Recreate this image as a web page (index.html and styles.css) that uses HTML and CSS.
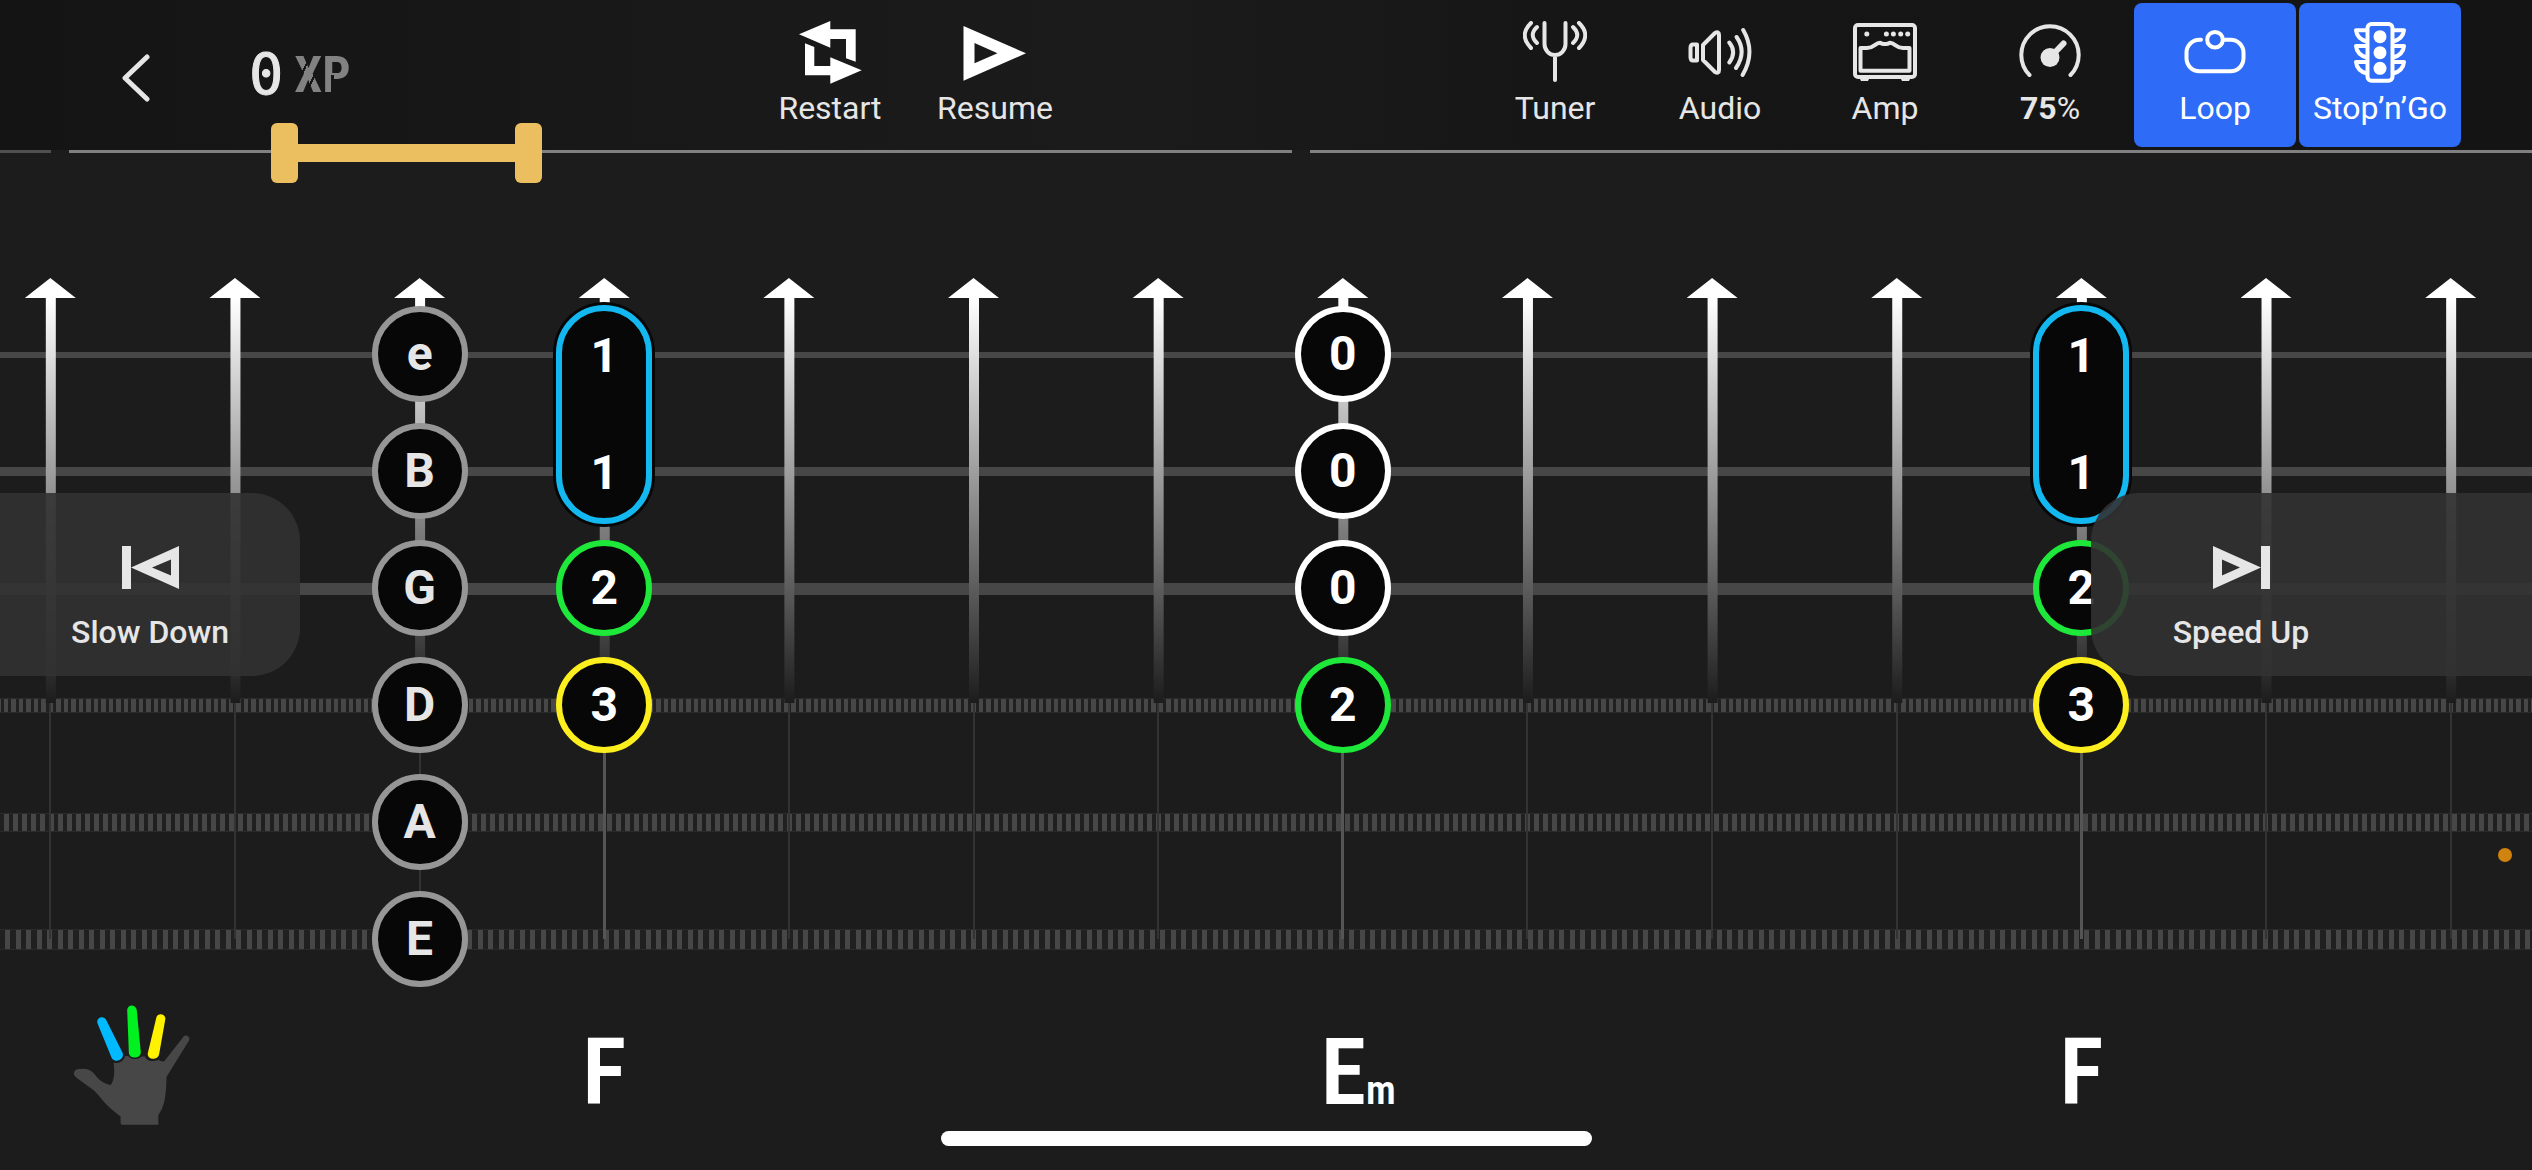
FILE: index.html
```html
<!DOCTYPE html>
<html lang="en">
<head>
<meta charset="utf-8">
<meta name="viewport" content="width=device-width, initial-scale=1">
<title>Chord practice</title>
<link rel="stylesheet" href="styles.css">
</head>
<body>
<header class="topbar">
  <div class="status">
    <button class="back" aria-label="Back"><svg width="28" height="48" viewBox="0 0 28 48" fill="none" stroke="currentColor" stroke-width="5" stroke-linecap="round" stroke-linejoin="round"><path d="M25 3 3 24 25 45"/></svg></button>
    <p class="score"><span class="score-value">0</span><span class="score-unit"><span class="unit-x">X</span><span class="unit-p">P</span></span></p>
  </div>
  <nav class="group">
    <button class="tool"><svg class="icon solid" viewBox="0 0 64 63"><path d="M1 13.3 32.3 0V8.3H57.7V40.7L48 37.3V18H32.3V26.7Z"/><path d="M7 22.3 16.3 26V45H32.3V36.3L63.7 49.3 32.3 62.7V54.3H7Z"/></svg>Restart</button>
    <button class="tool"><svg class="icon solid" viewBox="0 0 64 63"><path fill-rule="evenodd" d="M.5 5 63 32.3.5 59.7ZM11.5 22V42.3L34.5 32.3Z"/></svg>Resume</button>
  </nav>
  <nav class="group tools">
    <button class="tool"><svg class="icon" viewBox="0 0 64 63"><path d="M21.500 2V23a10.500 11 0 0 0 21 0V2M32 34V59M8 2Q-4.500 14 8 27M14 6Q5.500 14 14 22M56 2Q68.500 14 56 27M50 6Q58.500 14 50 22"/></svg>Tuner</button>
    <button class="tool"><svg class="icon" viewBox="0 0 64 63"><path d="M9 23.500H5Q2.500 23.500 2.500 27V36Q2.500 39.500 5 39.500H9ZM15 24 27 12Q31 10 31 14V49Q31 53 27 51L15 39ZM41.300 21.500Q49 31 41.300 41.500M48.600 16Q59 31 48 47M55.200 9Q68 31 54.600 54"/></svg>Audio</button>
    <button class="tool"><svg class="icon" viewBox="0 0 64 63"><rect x="2" y="4" width="60" height="52" rx="3"/><path d="M7.500 49.700V27H14C21 27 22 22 27 21.700Q30 23.500 32 23Q34 23.500 37 21.700C42 22 43 27 50 27H56.500V49.700Z"/><g class="fill"><circle cx="13.800" cy="13" r="2.500"/><circle cx="33.400" cy="13" r="2.500"/><circle cx="40.400" cy="13" r="2.500"/><circle cx="47.700" cy="13" r="2.500"/><circle cx="54.700" cy="13" r="2.500"/><path d="M6 56H17L15 60H8ZM47 56H58L56 60H49Z"/></g></svg>Amp</button>
    <button class="tool"><svg class="icon" viewBox="0 0 64 63"><path d="M11.500 54A28.700 28.700 0 1 1 52.500 54"/><circle class="fill" cx="32" cy="36.500" r="9.500"/><path class="thick" d="M32 36.500 45.500 22.500"/></svg><span><b>75</b>%</span></button>
    <button class="tool active" aria-pressed="true"><svg class="icon" viewBox="0 0 64 63"><path d="M18 18.700H16.500A13 13 0 0 0 3.500 31.700V37.300A13 13 0 0 0 16.500 50.300H47.500A13 13 0 0 0 60.500 37.300V31.700A13 13 0 0 0 47.500 18.700H40"/><circle cx="32" cy="18.700" r="7.800"/></svg>Loop</button>
    <button class="tool active" aria-pressed="true"><svg class="icon" viewBox="0 0 64 63"><rect x="19.500" y="3" width="25" height="56.700" rx="4"/><g class="fill"><circle cx="32" cy="15.700" r="6.500"/><circle cx="32" cy="31.700" r="6.500"/><circle cx="32" cy="47.300" r="6.500"/></g><path d="M45 9.300H56Q55 18 45 20.500M45 25H56Q55 34 45 36.500M45 41H56Q55 50 45 52.500M19 9.300H8Q9 18 19 20.500M19 25H8Q9 34 19 36.500M19 41H8Q9 50 19 52.500"/></svg>Stop’n’Go</button>
  </nav>
</header>
<div class="timeline">
  <span class="segment past"></span><span class="segment"></span><span class="segment"></span>
  <div class="loop-range"><button class="handle" aria-label="Loop start"></button><button class="handle" aria-label="Loop end"></button></div>
</div>
<main>
  <section class="fretboard">
    <div class="strings">
      <div class="row"><i class="string s1"></i></div>
      <div class="row"><i class="string s2"></i></div>
      <div class="row"><i class="string s3"></i></div>
      <div class="row"><i class="string wound s4"></i></div>
      <div class="row"><i class="string wound s5"></i></div>
      <div class="row"><i class="string wound s6"></i></div>
    </div>
    <div class="beats">
      <i class="beat"></i><i class="beat"></i><i class="beat"></i><i class="beat chord"></i><i class="beat"></i><i class="beat"></i><i class="beat"></i><i class="beat chord"></i><i class="beat"></i><i class="beat"></i><i class="beat"></i><i class="beat chord"></i><i class="beat"></i><i class="beat"></i>
    </div>
    <div class="notes">
      <div class="stack tuning"><span class="note">e</span><span class="note">B</span><span class="note">G</span><span class="note">D</span><span class="note">A</span><span class="note">E</span></div>
      <div class="stack at-4"><span class="note barre index"><span>1</span><span>1</span></span><span class="note middle">2</span><span class="note ring">3</span></div>
      <div class="stack at-8"><span class="note">0</span><span class="note">0</span><span class="note">0</span><span class="note middle">2</span></div>
      <div class="stack at-12"><span class="note barre index"><span>1</span><span>1</span></span><span class="note middle">2</span><span class="note ring">3</span></div>
    </div>
    <button class="pace slower"><svg width="57" height="43" viewBox="0 0 57 43" fill="currentColor"><path d="M0 0H9V43H0Z"/><path fill-rule="evenodd" d="M9 21.500 57 0V43ZM30 21.500 49 29.500V13.500Z"/></svg>Slow Down</button>
    <button class="pace faster"><svg width="57" height="43" viewBox="0 0 57 43" fill="currentColor"><path d="M48 0H57V43H48Z"/><path fill-rule="evenodd" d="M48 21.500 0 0V43ZM27 21.500 9 29.500V13.500Z"/></svg>Speed Up</button>
    <i class="mic-dot"></i>
  </section>
</main>
<footer>
  <svg class="hand" viewBox="40 44 352 362"><g fill="#474747"><path d="M42 250Q44 236 62 237C86 234 100 245 112 262Q128 281 153 285C166 270 165 240 162 218Q188 224 197 198H205Q226 214 248 199H256Q266 220 298 210Q308 217 316 213L322 252Q321 310 315 335Q310 358 297 376V405H188Q183 405 183 400V380Q150 356 132 335Q116 314 102 301L52 265Q42 258 42 250Z"/><path d="M313 216 371 142C377 131 394 137 390 150L321 262Z"/></g><g stroke="#1c1c1c" stroke-width="8" stroke-linejoin="round" paint-order="stroke"><path fill="#00b9ff" d="M113 98C110 80 134 75 140 90L189 188C196 209 167 222 156 203Z"/><path fill="#00f020" d="M203 60C203 41 230 41 232 60L244 186C245 208 209 208 208 187Z"/><path fill="#fff200" d="M291 82C295 66 320 70 318 87L299 194C294 213 263 209 265 190Z"/></g></svg>
  <div class="chords">
    <span class="chord-name at-4">F</span>
    <span class="chord-name at-8">E<small>m</small></span>
    <span class="chord-name at-12">F</span>
  </div>
</footer>
<div class="home-indicator"></div>
</body>
</html>
```
FILE: styles.css
```css
:root {
  --bg: #1c1c1c;
  --text: #e6e6e6;
  --string: #474747;
  --row: 117px;
}
* { box-sizing: border-box; }
body {
  margin: 0;
  min-height: 100vh;
  display: flex;
  flex-direction: column;
  background: var(--bg);
  color: var(--text);
  font-family: Roboto, "Liberation Sans", sans-serif;
  font-size: 32px;
  line-height: 32px;
  overflow-x: hidden;
}
button {
  margin: 0;
  padding: 0;
  border: 0;
  background: none;
  color: inherit;
  font: inherit;
}

/* Top bar */
.topbar {
  display: flex;
  height: 150px;
  padding: 3px 71px 3px 0;
  background: linear-gradient(90deg, #141414, #191919 30%, #1b1b1b 45%, #161616 62%, #141414);
}
.status {
  display: flex;
  align-items: center;
  flex: 0 0 749px;
  padding-left: 122px;
  gap: 99px;
}
.back { display: flex; padding-top: 6px; }
.score { display: flex; align-items: center; gap: 11px; margin: 0; }
.score-value { font: 57px/56px "DejaVu Sans Mono", monospace; -webkit-text-stroke: 1px var(--text); }
.score-unit { display: flex; font: 700 50px/50px "Roboto Condensed", Roboto, sans-serif; color: transparent; }
.unit-x {
  background: linear-gradient(115deg, #828282 calc(50% - 7px), transparent 0 calc(50% - 5px), #828282 0 calc(50% + 5px), transparent 0 calc(50% + 7px), #828282 0);
  background-clip: text;
  -webkit-background-clip: text;
}
.unit-p {
  background: linear-gradient(#828282, #828282) top / 100% 50% no-repeat, linear-gradient(90deg, #828282 9px, transparent 0 12px, #828282 0) bottom / 100% 50% no-repeat;
  background-clip: text;
  -webkit-background-clip: text;
}
.group { display: flex; gap: 3px; }
.tools { margin-left: auto; }
.tool {
  display: flex;
  flex-direction: column;
  align-items: center;
  gap: 8px;
  width: 162px;
  padding-top: 18px;
  border-radius: 8px;
  white-space: nowrap;
}
.tool.active { background: #2e6bf6; color: #fff; }
.icon {
  width: 64px;
  height: 63px;
  fill: none;
  stroke: currentColor;
  stroke-width: 4;
  stroke-linecap: round;
  stroke-linejoin: round;
}
.icon.solid { fill: #fff; stroke: none; }
.icon .fill { fill: currentColor; stroke: none; }
.icon .thick { stroke-width: 6; }

/* Song position and loop range */
.timeline { position: relative; display: flex; gap: 18px; height: 3px; }
.segment { flex: 1222; background: #808080; }
.segment.past { flex: 51; background: #505050; }
.loop-range {
  position: absolute;
  left: 10.700%;
  top: -27px;
  display: flex;
  justify-content: space-between;
  width: 271px;
  height: 60px;
  background: linear-gradient(#ebbf60, #ebbf60) center / 240px 18px no-repeat;
}
.handle { width: 27px; border-radius: 6px; background: #ebbf60; }

/* Fretboard */
.fretboard {
  position: relative;
  display: grid;
  margin-top: 125px;
  overflow: hidden;
}
.strings, .beats, .notes { grid-area: 1 / 1; }
.strings { padding-top: 18px; }
.row { display: flex; align-items: center; height: var(--row); }
.string { flex: 1; background: var(--string); }
.s1 { height: 6px; }
.s2 { height: 9px; }
.s3 { height: 12px; }
.wound { border: solid #2a2a2a; border-width: 1px 0; background-color: var(--bg); }
.s4 { height: 15px; background-image: repeating-linear-gradient(90deg, #474747 0 1px, #202020 0 4px, #474747 0 8px, #202020 0 11px, #474747 0 15px); }
.s5 { height: 19px; background-image: repeating-linear-gradient(90deg, #202020 0 4px, #474747 0 9px); }
.s6 { height: 21px; background-image: repeating-linear-gradient(90deg, #202020 0 5px, #474747 0 10px, #202020 0 16px, #474747 0 21px); }

.beats, .notes, .chords {
  display: grid;
  grid-template-columns: repeat(14, 1fr);
  margin: 0 -11px 0 -42px;
}
.beat { display: flex; flex-direction: column; align-items: center; }
.beat::before {
  content: "";
  width: 51px;
  height: 425px;
  background: linear-gradient(#fff, #fff 20px, var(--bg));
  clip-path: polygon(50% 0, 100% 20px, 31px 20px, 31px 100%, 21px 100%, 21px 20px, 0 20px);
}
.beat::after { content: ""; width: 2px; height: 236px; background: #333; }
.beat.chord::after { width: 3px; background: #555; }

.notes { z-index: 1; padding-top: 18px; font-size: 48px; font-weight: 700; }
.stack { grid-row: 1; display: flex; flex-direction: column; align-items: center; }
.note {
  display: flex;
  align-items: center;
  justify-content: center;
  width: 96px;
  height: 96px;
  margin: 10px 0 11px;
  border: 6px solid #fff;
  border-radius: 48px;
  background: #070707;
  color: #fff;
}
.note.barre {
  flex-direction: column;
  gap: 85px;
  height: 219px;
  margin: 9px 0 6px;
  box-shadow: 0 0 0 3px #070707;
}
.index { border-color: #14b8f0; }
.middle { border-color: #1ee83a; }
.ring { border-color: #fdee1e; }
.tuning { grid-column: 3; }
.tuning .note { border-color: #969696; color: var(--text); }
.at-4 { grid-column: 4; }
.at-8 { grid-column: 8; }
.at-12 { grid-column: 12; }

/* Tempo panels */
.pace {
  position: absolute;
  z-index: 2;
  top: 215px;
  display: flex;
  flex-direction: column;
  align-items: center;
  gap: 27px;
  width: 300px;
  height: 183px;
  padding-top: 53px;
  background: rgba(50, 50, 50, .9);
  font-weight: 500;
}
.slower { left: 0; border-radius: 0 48px 48px 0; }
.faster { right: 0; width: 441px; padding-right: 141px; border-radius: 48px 0 0 48px; }
.mic-dot {
  position: absolute;
  top: 570px;
  right: 20px;
  width: 14px;
  height: 14px;
  border-radius: 50%;
  background: #d1830f;
}

/* Chord names */
footer { display: grid; overflow: hidden; }
.hand { grid-area: 1 / 1; width: 117px; height: 120px; margin: 7px 0 0 73px; }
.chords { grid-area: 1 / 1; padding-top: 29px; }
.chord-name {
  grid-row: 1;
  padding-left: calc(50% - 22px);
  color: #fff;
  font: 600 92px/92px "Roboto Condensed", Roboto, sans-serif;
  white-space: nowrap;
}
.chord-name small { font-size: 40px; line-height: 40px; }
.home-indicator {
  align-self: center;
  width: 651px;
  height: 15px;
  margin: 6px 0 24px;
  border-radius: 8px;
  background: #fff;
}
```
